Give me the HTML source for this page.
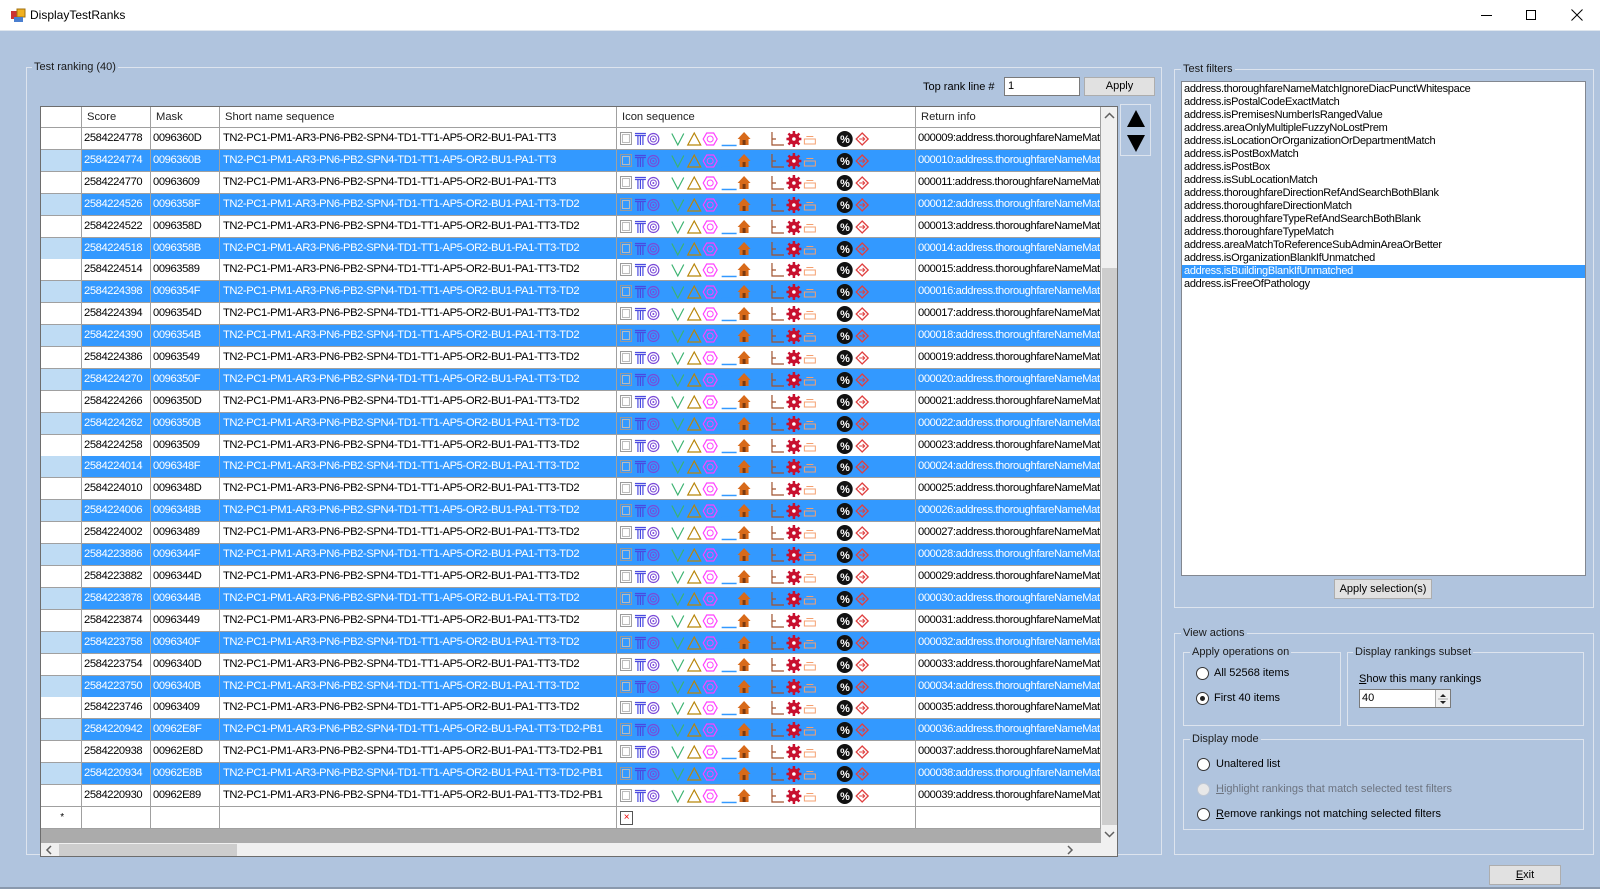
<!DOCTYPE html>
<html><head><meta charset="utf-8"><style>
*{box-sizing:border-box;margin:0;padding:0}
body{width:1600px;height:889px;overflow:hidden;background:#b0c4de;font-family:"Liberation Sans",Arial,sans-serif;font-size:11px;color:#000;position:relative}
.a{position:absolute}
.tb{left:0;top:0;width:1600px;height:31px;background:#fff;border-bottom:1px solid #dfe6ee}
.gb{position:absolute;border:1px solid #dde4ee}
.gl{position:absolute;background:#b0c4de;padding:0 2px;white-space:nowrap;font-size:11px;color:#1a1a1a}
.btn{position:absolute;background:#e1e1e1;border:1px solid #adadad;text-align:center;font-size:11px;color:#000}
.grid{left:40px;top:106px;width:1078px;height:751px;background:#ababab;border:1px solid #6d6d6d;overflow:hidden}
.r{position:absolute;left:0;width:1060px;height:22px}
.c{position:absolute;top:0;height:22px;border-right:1px solid #a0a0a0;border-bottom:1px solid #a0a0a0;line-height:21px;padding-left:2px;white-space:nowrap;overflow:hidden;background:#fff;font-size:11.2px;letter-spacing:-0.4px}
.c0{left:0;width:41px}.c1{left:41px;width:69px}.c2{left:110px;width:69px}.c3{left:179px;width:397px;padding-left:3px}.c4{left:576px;width:299px;padding:0}.c5{left:875px;width:185px}
.s .c{background:#3399ff;color:#fff}
.s .c0{background:#bfdcf4}
.hd .c{color:#222;letter-spacing:0}
.c4 svg{position:absolute;left:0;top:0}
.rad{position:absolute;width:13px;height:13px;border-radius:50%;border:1px solid #333;background:#fff}
.lt{position:absolute;white-space:nowrap;font-size:11px}
</style></head><body>
<svg width="0" height="0" style="position:absolute"><defs>
<symbol id="ic" viewBox="0 0 300 22">
<rect x="3.5" y="4.5" width="11" height="12" fill="none" stroke="#999"/><rect x="5.5" y="6.5" width="7" height="8" fill="none" stroke="#bbb"/>
<path d="M18 5.5h11M18 7.5h11M21 7v10M23.5 7v10M26 7v10" stroke="#4a4ae0" stroke-width="1.2" fill="none"/>
<circle cx="36.5" cy="11" r="5.5" fill="none" stroke="#7a4ad8" stroke-width="1.2"/><circle cx="36.5" cy="11" r="3" fill="none" stroke="#7a4ad8"/><circle cx="36.5" cy="11" r="1" fill="#7a4ad8"/>
<path d="M55 5.5L61 17L67 5.5" stroke="#3cb371" stroke-width="1.2" fill="none"/>
<path d="M71 17L77.5 5L84 17Z" stroke="#b8860b" stroke-width="1.2" fill="none"/>
<path d="M90 5L97 5L100.5 11L97 17L90 17L86.5 11Z" stroke="#ff40ff" stroke-width="1.2" fill="none"/><circle cx="93.5" cy="11" r="3" fill="none" stroke="#ff40ff"/>
<path d="M105 17.5h15" stroke="#3399ff" stroke-width="1.5"/>
<path d="M121 11L127.5 4L134 11L132 11L132 17L123 17L123 11Z" fill="#d86a1a"/><rect x="126" y="12" width="3" height="5" fill="#7a3a10"/>
<path d="M155.5 4v13h12M155.5 11h4" stroke="#a0522d" stroke-width="1.2" fill="none"/>
<circle cx="177.5" cy="11" r="5.5" fill="#c8102e"/><path d="M177.5 3v16M170 11h15M172 5.5l11 11M183 5.5l-11 11" stroke="#c8102e" stroke-width="2.5"/><circle cx="177.5" cy="11" r="1.8" fill="#fff"/>
<path d="M188 11h11v5h-11z" fill="none" stroke="#f4a070"/><path d="M190 8.5h7" stroke="#f4a070"/>
<circle cx="228.5" cy="11" r="8" fill="#111"/><text x="228.5" y="15" text-anchor="middle" font-family="Liberation Sans,sans-serif" font-weight="bold" font-size="11" fill="#fff">%</text>
<path d="M246 5L252 11L246 17L240 11Z" fill="none" stroke="#e04040" stroke-width="1.3"/><path d="M243 11h5M246.5 9l2 2l-2 2" stroke="#e04040" fill="none"/>
</symbol></defs></svg>

<div class="a tb"></div>
<svg class="a" style="left:10px;top:8px" width="16" height="16"><rect x="1" y="3" width="6" height="8" fill="#c33"/><rect x="7" y="1" width="8" height="8" fill="#f0b020" stroke="#a07010"/><rect x="4" y="9" width="9" height="5" fill="#4a7fd0"/></svg>
<div class="lt" style="left:30px;top:8px;font-size:12px">DisplayTestRanks</div>
<div class="a" style="left:1481px;top:15px;width:11px;height:1px;background:#000"></div>
<div class="a" style="left:1526px;top:10px;width:10px;height:10px;border:1px solid #000"></div>
<svg class="a" style="left:1571px;top:9px" width="12" height="12"><path d="M0.5 0.5L11.5 11.5M11.5 0.5L0.5 11.5" stroke="#000"/></svg>

<div class="gb" style="left:26px;top:67px;width:1136px;height:788px"></div>
<div class="gl" style="left:32px;top:61px">Test ranking (40)</div>
<div class="lt" style="left:923px;top:81px">Top rank line #</div>
<div class="a" style="left:1004px;top:77px;width:76px;height:19px;background:#fff;border:1px solid #7a7a7a;padding:2px 3px;font-size:11px">1</div>
<div class="btn" style="left:1084px;top:77px;width:71px;height:19px;line-height:17px">Apply</div>
<div class="a" style="left:1120px;top:104px;width:31px;height:52px;border:1px solid #dde4ee"></div>
<svg class="a" style="left:1125px;top:108px" width="22" height="46"><path d="M11 2L20 19H2Z" fill="#000"/><path d="M2 27H20L11 44Z" fill="#000"/></svg>

<div class="a grid">
<div class="r hd" style="top:0;height:21px"><div class="c c0" style="height:21px"></div><div class="c c1" style="height:21px;padding-left:5px">Score</div><div class="c c2" style="height:21px;padding-left:5px">Mask</div><div class="c c3" style="height:21px;padding-left:5px">Short name sequence</div><div class="c c4" style="height:21px;padding-left:5px">Icon sequence</div><div class="c c5" style="height:21px;padding-left:5px">Return info</div></div>
<div class="r" style="top:21px"><div class="c c0"></div><div class="c c1">2584224778</div><div class="c c2">0096360D</div><div class="c c3">TN2-PC1-PM1-AR3-PN6-PB2-SPN4-TD1-TT1-AP5-OR2-BU1-PA1-TT3</div><div class="c c4"><svg width="299" height="22"><use href="#ic"/></svg></div><div class="c c5">000009:address.thoroughfareNameMatch</div></div>
<div class="r s" style="top:43px"><div class="c c0"></div><div class="c c1">2584224774</div><div class="c c2">0096360B</div><div class="c c3">TN2-PC1-PM1-AR3-PN6-PB2-SPN4-TD1-TT1-AP5-OR2-BU1-PA1-TT3</div><div class="c c4"><svg width="299" height="22"><use href="#ic"/></svg></div><div class="c c5">000010:address.thoroughfareNameMatch</div></div>
<div class="r" style="top:65px"><div class="c c0"></div><div class="c c1">2584224770</div><div class="c c2">00963609</div><div class="c c3">TN2-PC1-PM1-AR3-PN6-PB2-SPN4-TD1-TT1-AP5-OR2-BU1-PA1-TT3</div><div class="c c4"><svg width="299" height="22"><use href="#ic"/></svg></div><div class="c c5">000011:address.thoroughfareNameMatch</div></div>
<div class="r s" style="top:87px"><div class="c c0"></div><div class="c c1">2584224526</div><div class="c c2">0096358F</div><div class="c c3">TN2-PC1-PM1-AR3-PN6-PB2-SPN4-TD1-TT1-AP5-OR2-BU1-PA1-TT3-TD2</div><div class="c c4"><svg width="299" height="22"><use href="#ic"/></svg></div><div class="c c5">000012:address.thoroughfareNameMatch</div></div>
<div class="r" style="top:109px"><div class="c c0"></div><div class="c c1">2584224522</div><div class="c c2">0096358D</div><div class="c c3">TN2-PC1-PM1-AR3-PN6-PB2-SPN4-TD1-TT1-AP5-OR2-BU1-PA1-TT3-TD2</div><div class="c c4"><svg width="299" height="22"><use href="#ic"/></svg></div><div class="c c5">000013:address.thoroughfareNameMatch</div></div>
<div class="r s" style="top:131px"><div class="c c0"></div><div class="c c1">2584224518</div><div class="c c2">0096358B</div><div class="c c3">TN2-PC1-PM1-AR3-PN6-PB2-SPN4-TD1-TT1-AP5-OR2-BU1-PA1-TT3-TD2</div><div class="c c4"><svg width="299" height="22"><use href="#ic"/></svg></div><div class="c c5">000014:address.thoroughfareNameMatch</div></div>
<div class="r" style="top:152px"><div class="c c0"></div><div class="c c1">2584224514</div><div class="c c2">00963589</div><div class="c c3">TN2-PC1-PM1-AR3-PN6-PB2-SPN4-TD1-TT1-AP5-OR2-BU1-PA1-TT3-TD2</div><div class="c c4"><svg width="299" height="22"><use href="#ic"/></svg></div><div class="c c5">000015:address.thoroughfareNameMatch</div></div>
<div class="r s" style="top:174px"><div class="c c0"></div><div class="c c1">2584224398</div><div class="c c2">0096354F</div><div class="c c3">TN2-PC1-PM1-AR3-PN6-PB2-SPN4-TD1-TT1-AP5-OR2-BU1-PA1-TT3-TD2</div><div class="c c4"><svg width="299" height="22"><use href="#ic"/></svg></div><div class="c c5">000016:address.thoroughfareNameMatch</div></div>
<div class="r" style="top:196px"><div class="c c0"></div><div class="c c1">2584224394</div><div class="c c2">0096354D</div><div class="c c3">TN2-PC1-PM1-AR3-PN6-PB2-SPN4-TD1-TT1-AP5-OR2-BU1-PA1-TT3-TD2</div><div class="c c4"><svg width="299" height="22"><use href="#ic"/></svg></div><div class="c c5">000017:address.thoroughfareNameMatch</div></div>
<div class="r s" style="top:218px"><div class="c c0"></div><div class="c c1">2584224390</div><div class="c c2">0096354B</div><div class="c c3">TN2-PC1-PM1-AR3-PN6-PB2-SPN4-TD1-TT1-AP5-OR2-BU1-PA1-TT3-TD2</div><div class="c c4"><svg width="299" height="22"><use href="#ic"/></svg></div><div class="c c5">000018:address.thoroughfareNameMatch</div></div>
<div class="r" style="top:240px"><div class="c c0"></div><div class="c c1">2584224386</div><div class="c c2">00963549</div><div class="c c3">TN2-PC1-PM1-AR3-PN6-PB2-SPN4-TD1-TT1-AP5-OR2-BU1-PA1-TT3-TD2</div><div class="c c4"><svg width="299" height="22"><use href="#ic"/></svg></div><div class="c c5">000019:address.thoroughfareNameMatch</div></div>
<div class="r s" style="top:262px"><div class="c c0"></div><div class="c c1">2584224270</div><div class="c c2">0096350F</div><div class="c c3">TN2-PC1-PM1-AR3-PN6-PB2-SPN4-TD1-TT1-AP5-OR2-BU1-PA1-TT3-TD2</div><div class="c c4"><svg width="299" height="22"><use href="#ic"/></svg></div><div class="c c5">000020:address.thoroughfareNameMatch</div></div>
<div class="r" style="top:284px"><div class="c c0"></div><div class="c c1">2584224266</div><div class="c c2">0096350D</div><div class="c c3">TN2-PC1-PM1-AR3-PN6-PB2-SPN4-TD1-TT1-AP5-OR2-BU1-PA1-TT3-TD2</div><div class="c c4"><svg width="299" height="22"><use href="#ic"/></svg></div><div class="c c5">000021:address.thoroughfareNameMatch</div></div>
<div class="r s" style="top:306px"><div class="c c0"></div><div class="c c1">2584224262</div><div class="c c2">0096350B</div><div class="c c3">TN2-PC1-PM1-AR3-PN6-PB2-SPN4-TD1-TT1-AP5-OR2-BU1-PA1-TT3-TD2</div><div class="c c4"><svg width="299" height="22"><use href="#ic"/></svg></div><div class="c c5">000022:address.thoroughfareNameMatch</div></div>
<div class="r" style="top:328px"><div class="c c0"></div><div class="c c1">2584224258</div><div class="c c2">00963509</div><div class="c c3">TN2-PC1-PM1-AR3-PN6-PB2-SPN4-TD1-TT1-AP5-OR2-BU1-PA1-TT3-TD2</div><div class="c c4"><svg width="299" height="22"><use href="#ic"/></svg></div><div class="c c5">000023:address.thoroughfareNameMatch</div></div>
<div class="r s" style="top:349px"><div class="c c0"></div><div class="c c1">2584224014</div><div class="c c2">0096348F</div><div class="c c3">TN2-PC1-PM1-AR3-PN6-PB2-SPN4-TD1-TT1-AP5-OR2-BU1-PA1-TT3-TD2</div><div class="c c4"><svg width="299" height="22"><use href="#ic"/></svg></div><div class="c c5">000024:address.thoroughfareNameMatch</div></div>
<div class="r" style="top:371px"><div class="c c0"></div><div class="c c1">2584224010</div><div class="c c2">0096348D</div><div class="c c3">TN2-PC1-PM1-AR3-PN6-PB2-SPN4-TD1-TT1-AP5-OR2-BU1-PA1-TT3-TD2</div><div class="c c4"><svg width="299" height="22"><use href="#ic"/></svg></div><div class="c c5">000025:address.thoroughfareNameMatch</div></div>
<div class="r s" style="top:393px"><div class="c c0"></div><div class="c c1">2584224006</div><div class="c c2">0096348B</div><div class="c c3">TN2-PC1-PM1-AR3-PN6-PB2-SPN4-TD1-TT1-AP5-OR2-BU1-PA1-TT3-TD2</div><div class="c c4"><svg width="299" height="22"><use href="#ic"/></svg></div><div class="c c5">000026:address.thoroughfareNameMatch</div></div>
<div class="r" style="top:415px"><div class="c c0"></div><div class="c c1">2584224002</div><div class="c c2">00963489</div><div class="c c3">TN2-PC1-PM1-AR3-PN6-PB2-SPN4-TD1-TT1-AP5-OR2-BU1-PA1-TT3-TD2</div><div class="c c4"><svg width="299" height="22"><use href="#ic"/></svg></div><div class="c c5">000027:address.thoroughfareNameMatch</div></div>
<div class="r s" style="top:437px"><div class="c c0"></div><div class="c c1">2584223886</div><div class="c c2">0096344F</div><div class="c c3">TN2-PC1-PM1-AR3-PN6-PB2-SPN4-TD1-TT1-AP5-OR2-BU1-PA1-TT3-TD2</div><div class="c c4"><svg width="299" height="22"><use href="#ic"/></svg></div><div class="c c5">000028:address.thoroughfareNameMatch</div></div>
<div class="r" style="top:459px"><div class="c c0"></div><div class="c c1">2584223882</div><div class="c c2">0096344D</div><div class="c c3">TN2-PC1-PM1-AR3-PN6-PB2-SPN4-TD1-TT1-AP5-OR2-BU1-PA1-TT3-TD2</div><div class="c c4"><svg width="299" height="22"><use href="#ic"/></svg></div><div class="c c5">000029:address.thoroughfareNameMatch</div></div>
<div class="r s" style="top:481px"><div class="c c0"></div><div class="c c1">2584223878</div><div class="c c2">0096344B</div><div class="c c3">TN2-PC1-PM1-AR3-PN6-PB2-SPN4-TD1-TT1-AP5-OR2-BU1-PA1-TT3-TD2</div><div class="c c4"><svg width="299" height="22"><use href="#ic"/></svg></div><div class="c c5">000030:address.thoroughfareNameMatch</div></div>
<div class="r" style="top:503px"><div class="c c0"></div><div class="c c1">2584223874</div><div class="c c2">00963449</div><div class="c c3">TN2-PC1-PM1-AR3-PN6-PB2-SPN4-TD1-TT1-AP5-OR2-BU1-PA1-TT3-TD2</div><div class="c c4"><svg width="299" height="22"><use href="#ic"/></svg></div><div class="c c5">000031:address.thoroughfareNameMatch</div></div>
<div class="r s" style="top:525px"><div class="c c0"></div><div class="c c1">2584223758</div><div class="c c2">0096340F</div><div class="c c3">TN2-PC1-PM1-AR3-PN6-PB2-SPN4-TD1-TT1-AP5-OR2-BU1-PA1-TT3-TD2</div><div class="c c4"><svg width="299" height="22"><use href="#ic"/></svg></div><div class="c c5">000032:address.thoroughfareNameMatch</div></div>
<div class="r" style="top:547px"><div class="c c0"></div><div class="c c1">2584223754</div><div class="c c2">0096340D</div><div class="c c3">TN2-PC1-PM1-AR3-PN6-PB2-SPN4-TD1-TT1-AP5-OR2-BU1-PA1-TT3-TD2</div><div class="c c4"><svg width="299" height="22"><use href="#ic"/></svg></div><div class="c c5">000033:address.thoroughfareNameMatch</div></div>
<div class="r s" style="top:569px"><div class="c c0"></div><div class="c c1">2584223750</div><div class="c c2">0096340B</div><div class="c c3">TN2-PC1-PM1-AR3-PN6-PB2-SPN4-TD1-TT1-AP5-OR2-BU1-PA1-TT3-TD2</div><div class="c c4"><svg width="299" height="22"><use href="#ic"/></svg></div><div class="c c5">000034:address.thoroughfareNameMatch</div></div>
<div class="r" style="top:590px"><div class="c c0"></div><div class="c c1">2584223746</div><div class="c c2">00963409</div><div class="c c3">TN2-PC1-PM1-AR3-PN6-PB2-SPN4-TD1-TT1-AP5-OR2-BU1-PA1-TT3-TD2</div><div class="c c4"><svg width="299" height="22"><use href="#ic"/></svg></div><div class="c c5">000035:address.thoroughfareNameMatch</div></div>
<div class="r s" style="top:612px"><div class="c c0"></div><div class="c c1">2584220942</div><div class="c c2">00962E8F</div><div class="c c3">TN2-PC1-PM1-AR3-PN6-PB2-SPN4-TD1-TT1-AP5-OR2-BU1-PA1-TT3-TD2-PB1</div><div class="c c4"><svg width="299" height="22"><use href="#ic"/></svg></div><div class="c c5">000036:address.thoroughfareNameMatch</div></div>
<div class="r" style="top:634px"><div class="c c0"></div><div class="c c1">2584220938</div><div class="c c2">00962E8D</div><div class="c c3">TN2-PC1-PM1-AR3-PN6-PB2-SPN4-TD1-TT1-AP5-OR2-BU1-PA1-TT3-TD2-PB1</div><div class="c c4"><svg width="299" height="22"><use href="#ic"/></svg></div><div class="c c5">000037:address.thoroughfareNameMatch</div></div>
<div class="r s" style="top:656px"><div class="c c0"></div><div class="c c1">2584220934</div><div class="c c2">00962E8B</div><div class="c c3">TN2-PC1-PM1-AR3-PN6-PB2-SPN4-TD1-TT1-AP5-OR2-BU1-PA1-TT3-TD2-PB1</div><div class="c c4"><svg width="299" height="22"><use href="#ic"/></svg></div><div class="c c5">000038:address.thoroughfareNameMatch</div></div>
<div class="r" style="top:678px"><div class="c c0"></div><div class="c c1">2584220930</div><div class="c c2">00962E89</div><div class="c c3">TN2-PC1-PM1-AR3-PN6-PB2-SPN4-TD1-TT1-AP5-OR2-BU1-PA1-TT3-TD2-PB1</div><div class="c c4"><svg width="299" height="22"><use href="#ic"/></svg></div><div class="c c5">000039:address.thoroughfareNameMatch</div></div>
<div class="r" style="top:700px"><div class="c c0" style="text-align:center;font-size:10px">*</div><div class="c c1"></div><div class="c c2"></div><div class="c c3"></div><div class="c c4"><div class="a" style="left:3px;top:4px;width:13px;height:14px;border:1px solid #555;color:#e00;font-size:10px;line-height:11px;text-align:center">×</div></div><div class="c c5"></div></div>
<div class="a" style="left:1060px;top:0;width:17px;height:736px;background:#f0f0f0"></div>
<div class="a" style="left:1061px;top:161px;width:15px;height:557px;background:#cdcdcd"></div>
<svg class="a" style="left:1063px;top:4px" width="11" height="10"><path d="M1 7L5.5 2.5L10 7" stroke="#606060" stroke-width="1.5" fill="none"/></svg>
<svg class="a" style="left:1063px;top:722px" width="11" height="10"><path d="M1 3L5.5 7.5L10 3" stroke="#606060" stroke-width="1.5" fill="none"/></svg>
<div class="a" style="left:0;top:736px;width:1077px;height:14px;background:#f0f0f0"></div>
<div class="a" style="left:18px;top:737px;width:178px;height:12px;background:#cdcdcd"></div>
<svg class="a" style="left:3px;top:738px" width="10" height="10"><path d="M7 1L3 5L7 9" stroke="#606060" stroke-width="1.5" fill="none"/></svg>
<svg class="a" style="left:1024px;top:738px" width="10" height="10"><path d="M3 1L7 5L3 9" stroke="#606060" stroke-width="1.5" fill="none"/></svg>
</div>

<div class="gb" style="left:1174px;top:69px;width:420px;height:539px"></div>
<div class="gl" style="left:1181px;top:63px">Test filters</div>
<div class="a" style="left:1181px;top:81px;width:405px;height:495px;background:#fff;border:1px solid #828790;font-size:11px;line-height:13px;padding-top:1px;letter-spacing:-0.3px">
<div style="padding-left:2px">address.thoroughfareNameMatchIgnoreDiacPunctWhitespace</div>
<div style="padding-left:2px">address.isPostalCodeExactMatch</div>
<div style="padding-left:2px">address.isPremisesNumberIsRangedValue</div>
<div style="padding-left:2px">address.areaOnlyMultipleFuzzyNoLostPrem</div>
<div style="padding-left:2px">address.isLocationOrOrganizationOrDepartmentMatch</div>
<div style="padding-left:2px">address.isPostBoxMatch</div>
<div style="padding-left:2px">address.isPostBox</div>
<div style="padding-left:2px">address.isSubLocationMatch</div>
<div style="padding-left:2px">address.thoroughfareDirectionRefAndSearchBothBlank</div>
<div style="padding-left:2px">address.thoroughfareDirectionMatch</div>
<div style="padding-left:2px">address.thoroughfareTypeRefAndSearchBothBlank</div>
<div style="padding-left:2px">address.thoroughfareTypeMatch</div>
<div style="padding-left:2px">address.areaMatchToReferenceSubAdminAreaOrBetter</div>
<div style="padding-left:2px">address.isOrganizationBlankIfUnmatched</div>
<div style="padding-left:2px;background:#3399ff;color:#fff">address.isBuildingBlankIfUnmatched</div>
<div style="padding-left:2px">address.isFreeOfPathology</div>
</div>
<div class="btn" style="left:1334px;top:579px;width:98px;height:20px;line-height:18px">Apply selection(s)</div>

<div class="gb" style="left:1174px;top:633px;width:420px;height:222px"></div>
<div class="gl" style="left:1181px;top:627px">View actions</div>
<div class="gb" style="left:1183px;top:652px;width:158px;height:74px"></div>
<div class="gl" style="left:1190px;top:646px">Apply operations on</div>
<div class="rad" style="left:1196px;top:667px"></div>
<div class="lt" style="left:1214px;top:667px">All 52568 items</div>
<div class="rad" style="left:1196px;top:692px"><div class="a" style="left:3px;top:3px;width:5px;height:5px;border-radius:50%;background:#222"></div></div>
<div class="lt" style="left:1214px;top:692px">First 40 items</div>
<div class="gb" style="left:1347px;top:652px;width:237px;height:74px"></div>
<div class="gl" style="left:1353px;top:646px">Display rankings subset</div>
<div class="lt" style="left:1359px;top:673px"><u>S</u>how this many rankings</div>
<div class="a" style="left:1359px;top:689px;width:92px;height:19px;background:#fff;border:1px solid #7a7a7a;padding:2px 2px;font-size:11px">40</div>
<div class="a" style="left:1435px;top:690px;width:15px;height:17px;background:#f0f0f0;border-left:1px solid #aaa"></div>
<svg class="a" style="left:1438px;top:691px" width="10" height="16"><path d="M2 6L5 3L8 6Z M2 10L5 13L8 10Z" fill="#222"/><path d="M0 8h10" stroke="#aaa"/></svg>
<div class="gb" style="left:1183px;top:739px;width:401px;height:91px"></div>
<div class="gl" style="left:1190px;top:733px">Display mode</div>
<div class="rad" style="left:1197px;top:758px"></div>
<div class="lt" style="left:1216px;top:758px">Unaltered list</div>
<div class="rad" style="left:1197px;top:783px;border-color:#c0c8d4;background:#e8e8e8"></div>
<div class="lt" style="left:1216px;top:783px;color:#6d7480"><u>H</u>ighlight rankings that match selected test filters</div>
<div class="rad" style="left:1197px;top:808px"></div>
<div class="lt" style="left:1216px;top:808px"><u>R</u>emove rankings not matching selected filters</div>

<div class="btn" style="left:1489px;top:865px;width:72px;height:20px;line-height:18px"><u>E</u>xit</div>
<div class="a" style="left:0;top:887px;width:1600px;height:2px;background:#8a99ad"></div>
</body></html>
